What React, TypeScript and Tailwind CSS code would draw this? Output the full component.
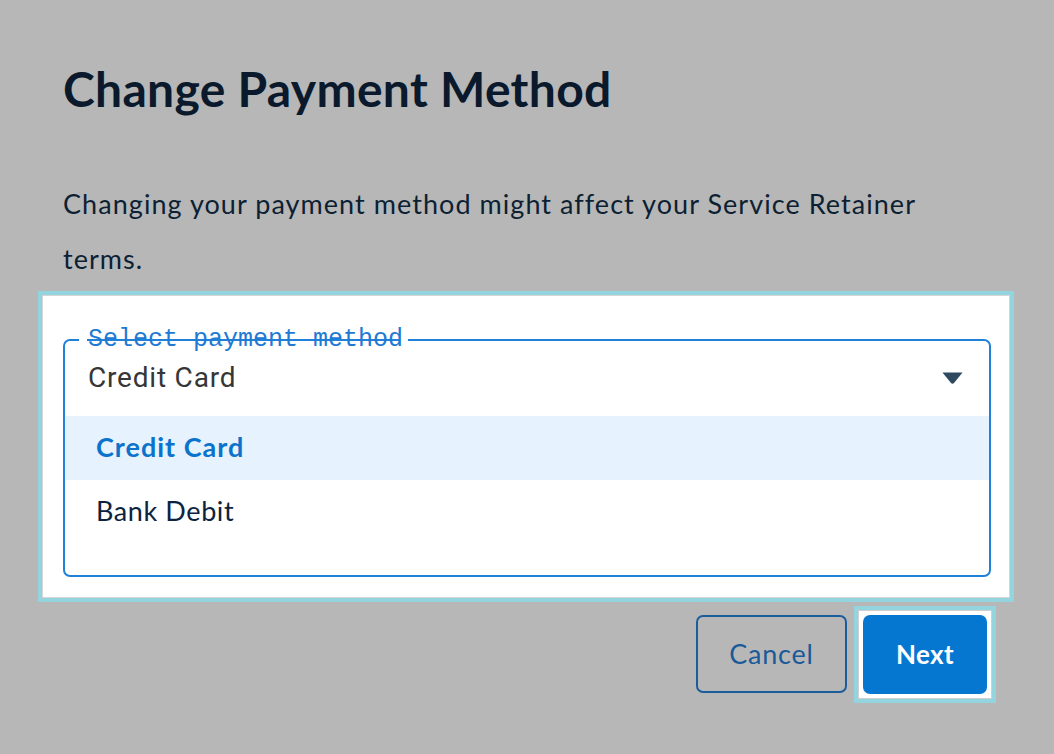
import React from "react";

export default function App() {
  return (
    <div
      className="w-[1054px] h-[754px] bg-[#b7b7b7] overflow-hidden"
      style={{ fontFamily: "Lato, 'Noto Sans', sans-serif" }}
    >
      <div className="pl-[63px] pr-[60px] pt-[60px]">
        <h1 className="text-[48px] leading-[1.2] font-bold text-[#0a1a2c] tracking-[0.3px]">
          Change Payment Method
        </h1>
        <p className="mt-[58px] max-w-[880px] text-[27px] leading-[55px] text-[#0d1f33] tracking-[1.05px]">
          Changing your payment method might affect your Service Retainer terms.
        </p>
      </div>

      <div className="mt-[9px] ml-[42px] mr-[44px] bg-white border border-[#d6d6d6] ring-4 ring-[#93d4df] pt-[43px] pb-[20px] pl-[20px] pr-[18px]">
        <div className="relative border-2 border-[#2180d8] rounded-[7px]">
          <span className="absolute top-[-3px] left-[14px] w-[8px] h-[4px] bg-white" />
          <span className="absolute top-[-3px] left-[335px] w-[8px] h-[4px] bg-white" />
          <span
            className="absolute top-[-14px] left-[23px] text-[25px] leading-[25px] text-[#1f7ad4]"
            style={{ fontFamily: "'Liberation Mono', monospace" }}
          >
            Select payment method
          </span>
          <div className="h-[75px] flex items-center justify-between pl-[23px] pr-[26px]">
            <span
              className="text-[28px] text-[#363636] tracking-[0.8px]"
              style={{ fontFamily: "Roboto, sans-serif" }}
            >
              Credit Card
            </span>
            <svg width="21" height="12" viewBox="0 0 21 12">
              <path d="M0.5 0.5 H20.5 L12 11 Q10.5 12.3 9 11 Z" fill="#2f4a60" />
            </svg>
          </div>
          <div className="h-[64px] flex items-center pl-[31px] bg-[#e6f2fd]">
            <span className="text-[27px] font-bold text-[#0b73cb] tracking-[1px]">
              Credit Card
            </span>
          </div>
          <div className="h-[64px] flex items-center pl-[31px]">
            <span className="text-[27px] text-[#0c2340] tracking-[0.6px]">Bank Debit</span>
          </div>
          <div className="h-[31px]" />
        </div>
      </div>

      <div className="mt-[12px] flex justify-end items-center gap-[11px] pr-[62px]">
        <button className="w-[151px] h-[78px] rounded-[7px] border-2 border-[#1b5d9c] text-[27px] text-[#1a5a98] tracking-[0.8px]">
          Cancel
        </button>
        <div className="bg-white border border-[#cfcfcf] ring-4 ring-[#93d4df] p-[4px]">
          <button className="w-[124px] h-[79px] rounded-[7px] bg-[#0577d1] text-white text-[26px] font-bold tracking-[0.3px]">
            Next
          </button>
        </div>
      </div>
    </div>
  );
}
